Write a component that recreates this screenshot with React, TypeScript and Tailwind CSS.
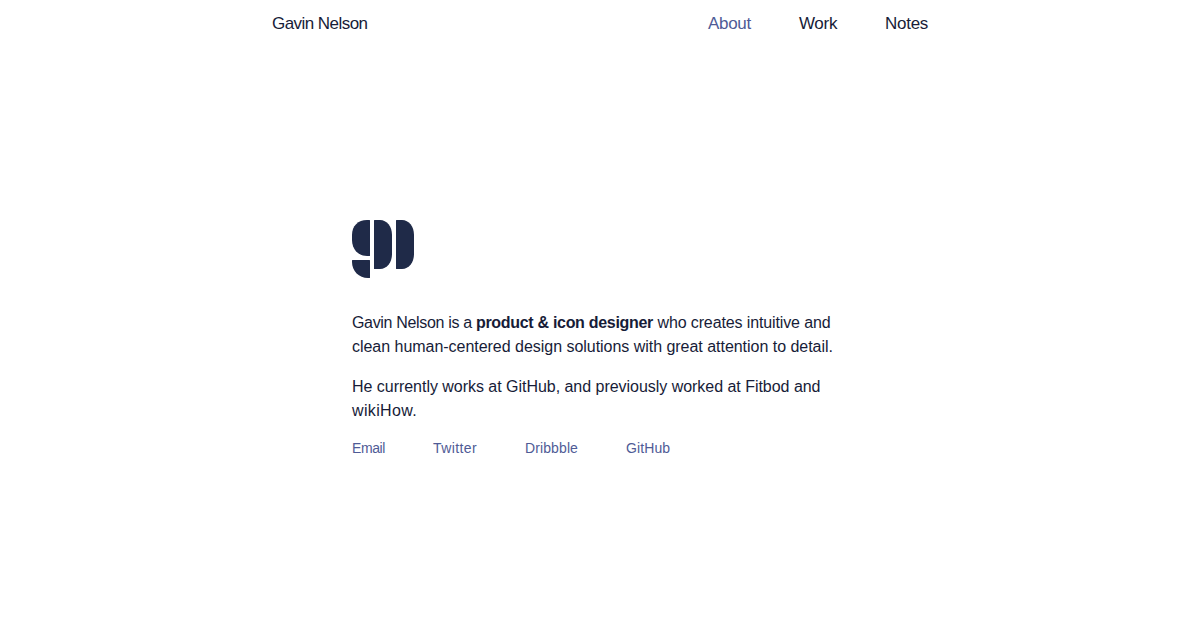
const font = "font-['Liberation_Sans',Arial,sans-serif]"

const links = [
  { label: 'Email', className: 'tracking-[-0.4px]' },
  { label: 'Twitter', className: 'tracking-[0.4px]' },
  { label: 'Dribbble', className: 'tracking-[0.1px]' },
  { label: 'GitHub', className: 'tracking-[0.1px]' },
]

function Logo() {
  return (
    <svg width="62" height="58" viewBox="0 0 62 58" fill="#1f2a48" className="block">
      <path d="M17.5 0a.5.5 0 0 1 .5.5v35a.5.5 0 0 1-.5.5H15C6 36 0 29 0 20v-5C0 6 6 0 15 0z" />
      <path d="M22.500 0H28c6.900 0 12 6.500 12 15v19c0 8.500-5.100 15-12 15h-5.500a.5.500 0 0 1-.5-.5V.5a.5.500 0 0 1 .5-.5z" />
      <path d="M44.500 0H50c6.900 0 12 6.500 12 15v19c0 8.500-5.100 15-12 15h-5.500a.5.500 0 0 1-.5-.5V.5a.5.500 0 0 1 .5-.5z" />
      <path d="M.5 40h17a.5.5 0 0 1 .5.500v17a.5.500 0 0 1-.5.500H16C7 58 0 51 0 42v-1.500a.5.500 0 0 1 .5-.5z" />
    </svg>
  )
}

export default function App() {
  return (
    <div className={`min-h-[630px] bg-white text-[#171c38] ${font}`}>
      <header className="mx-auto flex h-12 w-[656px] items-center justify-between text-[17px]">
        <a className="tracking-[-0.55px]">Gavin Nelson</a>
        <nav className="flex gap-12 tracking-[-0.3px]">
          <a className="text-[#4f5b96]">About</a>
          <a>Work</a>
          <a>Notes</a>
        </nav>
      </header>

      <main className="mx-auto w-[496px] pt-[172px]">
        <Logo />
        <p className="mt-[33px] text-[16px] leading-6 tracking-[-0.03px]">
          <span className="tracking-[-0.33px]">Gavin Nelson is a </span>
          <strong className="font-bold tracking-[-0.3px]">product &amp; icon designer</strong>{' '}
          <span className="tracking-[-0.12px]">who creates intuitive and</span> clean human-centered design solutions with great attention to detail.
        </p>
        <p className="mt-4 text-[16px] leading-6 tracking-[-0.03px]">
          He currently works at GitHub, and previously worked at Fitbod and <span className="tracking-[0.35px]">wikiHow.</span>
        </p>
        <div className="mt-[15px] flex gap-12 text-[14px] leading-[21px] text-[#4f5b96]">
          {links.map((link) => (
            <a key={link.label} className={link.className}>
              {link.label}
            </a>
          ))}
        </div>
      </main>
    </div>
  )
}
